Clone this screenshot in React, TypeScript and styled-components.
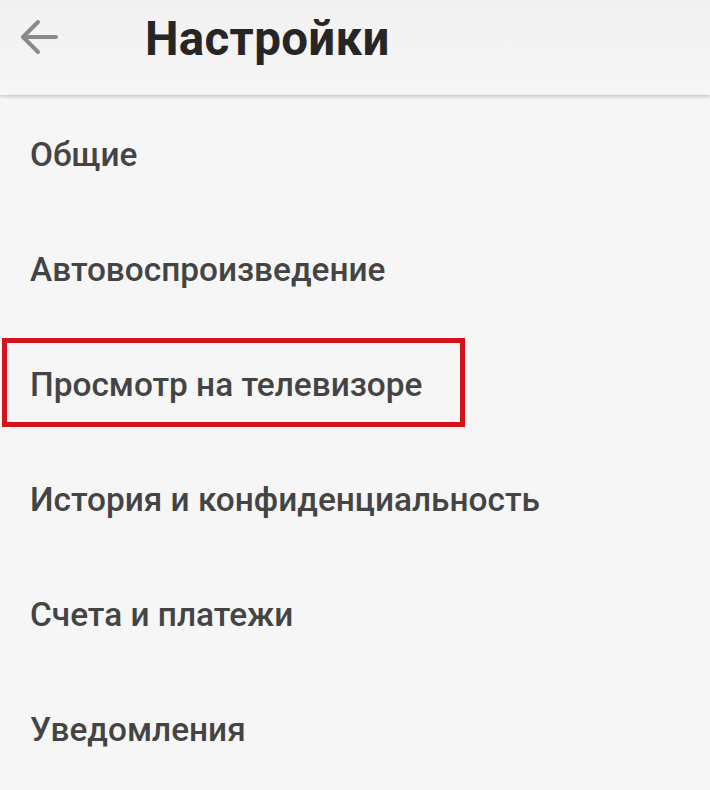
import React from "react";
import styled, { createGlobalStyle } from "styled-components";

const GlobalStyle = createGlobalStyle`
  html, body {
    margin: 0;
    padding: 0;
    background: #f5f6f5;
  }
  body {
    font-family: Roboto, "Noto Sans", "DejaVu Sans", sans-serif;
  }
`;

const Screen = styled.div`
  width: 710px;
  height: 790px;
  overflow: hidden;
  background: #f5f6f5;
`;

const Toolbar = styled.header`
  height: 95px;
  display: flex;
  align-items: center;
  background: linear-gradient(#f1f1f1, #f6f6f6);
  box-shadow: 0 2px 3px rgba(0, 0, 0, 0.18);
  position: relative;
  z-index: 1;
`;

const BackButton = styled.button`
  width: 78px;
  height: 76px;
  padding: 0;
  border: 0;
  background: transparent;
  display: flex;
  align-items: center;
  justify-content: center;
  margin-top: -20px;
`;

const Title = styled.h1`
  margin: -18px 0 0 67px;
  font-size: 47.5px;
  font-weight: 700;
  color: #262626;
  letter-spacing: 0.3px;
`;

const List = styled.ul`
  list-style: none;
  margin: 0;
  padding: 2px 0 0;
`;

const Item = styled.li<{ $highlighted?: boolean }>`
  position: relative;
  height: 115px;
  display: flex;
  align-items: center;
  padding-left: 30px;
  font-size: 33.4px;
  font-weight: 500;
  color: #444444;

  ${({ $highlighted }) =>
    $highlighted &&
    `
    &::after {
      content: "";
      position: absolute;
      left: 2px;
      top: 11px;
      width: 453px;
      height: 79px;
      border: 5px solid #d4121c;
    }
  `}
`;

const items = [
  "Общие",
  "Автовоспроизведение",
  "Просмотр на телевизоре",
  "История и конфиденциальность",
  "Счета и платежи",
  "Уведомления",
];

const ArrowIcon = () => (
  <svg width="40" height="40" viewBox="0 0 40 40" fill="none">
    <path
      d="M37 19H5M19 4L4 19l15 15"
      stroke="#8a8a8a"
      strokeWidth="4"
      strokeLinecap="round"
      strokeLinejoin="round"
    />
  </svg>
);

export default function App() {
  return (
    <Screen>
      <GlobalStyle />
      <Toolbar>
        <BackButton aria-label="Назад">
          <ArrowIcon />
        </BackButton>
        <Title>Настройки</Title>
      </Toolbar>
      <List>
        {items.map((label, i) => (
          <Item key={label} $highlighted={i === 2}>
            {label}
          </Item>
        ))}
      </List>
    </Screen>
  );
}
